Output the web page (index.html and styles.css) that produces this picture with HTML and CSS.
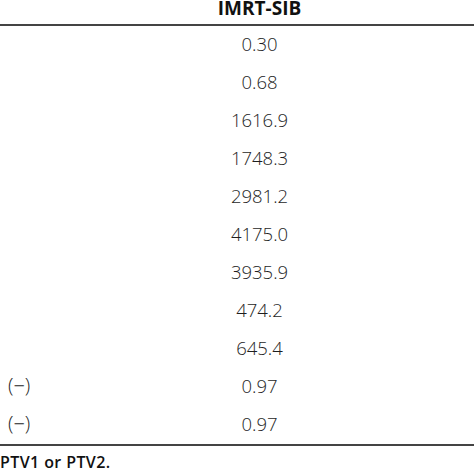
FILE: index.html
```html
<!DOCTYPE html>
<html lang="en">
  <head>
    <meta charset="UTF-8" />
    <title>Dosimetric parameters</title>
    <link rel="stylesheet" href="styles.css">
  </head>
  <body>

      <table class="dose-table">
          <thead>
              <tr>
                  <th class="label"></th>
                  <th class="value">IMRT-SIB</th>
                  <th class="rest"></th>
              </tr>
          </thead>
          <tbody>
              <tr><td class="label"></td><td class="value">0.30</td><td class="rest"></td></tr>
              <tr><td class="label"></td><td class="value">0.68</td><td class="rest"></td></tr>
              <tr><td class="label"></td><td class="value">1616.9</td><td class="rest"></td></tr>
              <tr><td class="label"></td><td class="value">1748.3</td><td class="rest"></td></tr>
              <tr><td class="label"></td><td class="value">2981.2</td><td class="rest"></td></tr>
              <tr><td class="label"></td><td class="value">4175.0</td><td class="rest"></td></tr>
              <tr><td class="label"></td><td class="value">3935.9</td><td class="rest"></td></tr>
              <tr><td class="label"></td><td class="value">474.2</td><td class="rest"></td></tr>
              <tr><td class="label"></td><td class="value">645.4</td><td class="rest"></td></tr>
              <tr><td class="label">(&minus;)</td><td class="value">0.97</td><td class="rest"></td></tr>
              <tr><td class="label">(&minus;)</td><td class="value">0.97</td><td class="rest"></td></tr>
          </tbody>
      </table>

      <p class="note">PTV1 or PTV2.</p>

  </body>
</html>
```

FILE: styles.css
```css
body {
    margin: 0;
    background: #fff;
    font-family: "Open Sans", "Noto Sans", sans-serif;
    color: #2a2a2a;
    overflow: hidden;
}

.dose-table {
    width: 474px;
    border-collapse: collapse;
    table-layout: fixed;
}

.dose-table th,
.dose-table td {
    box-sizing: border-box;
}

.dose-table .label {
    width: 179px;
    padding: 0 0 0 8px;
    text-align: left;
    font-size: 20px;
}

.dose-table .value {
    width: 161px;
    padding: 0;
    text-align: center;
}

.dose-table .rest {
    padding: 0;
}

.dose-table th {
    font-size: 19px;
    font-weight: bold;
    line-height: 17px;
    padding-top: 0;
    padding-bottom: 7px !important;
    color: #111;
    border-bottom: 2px solid #444;
}

.dose-table td {
    font-size: 18.5px;
    font-weight: 350;
    line-height: 36px;
    padding-bottom: 2px !important;
    color: #1e1e1e;
}

.dose-table tbody tr:last-child td {
    border-bottom: 2px solid #444;
}

.note {
    margin: 0;
    padding-top: 5px;
    font-size: 16px;
    font-weight: 600;
    letter-spacing: 0.4px;
    line-height: 22px;
    color: #111;
}
```
